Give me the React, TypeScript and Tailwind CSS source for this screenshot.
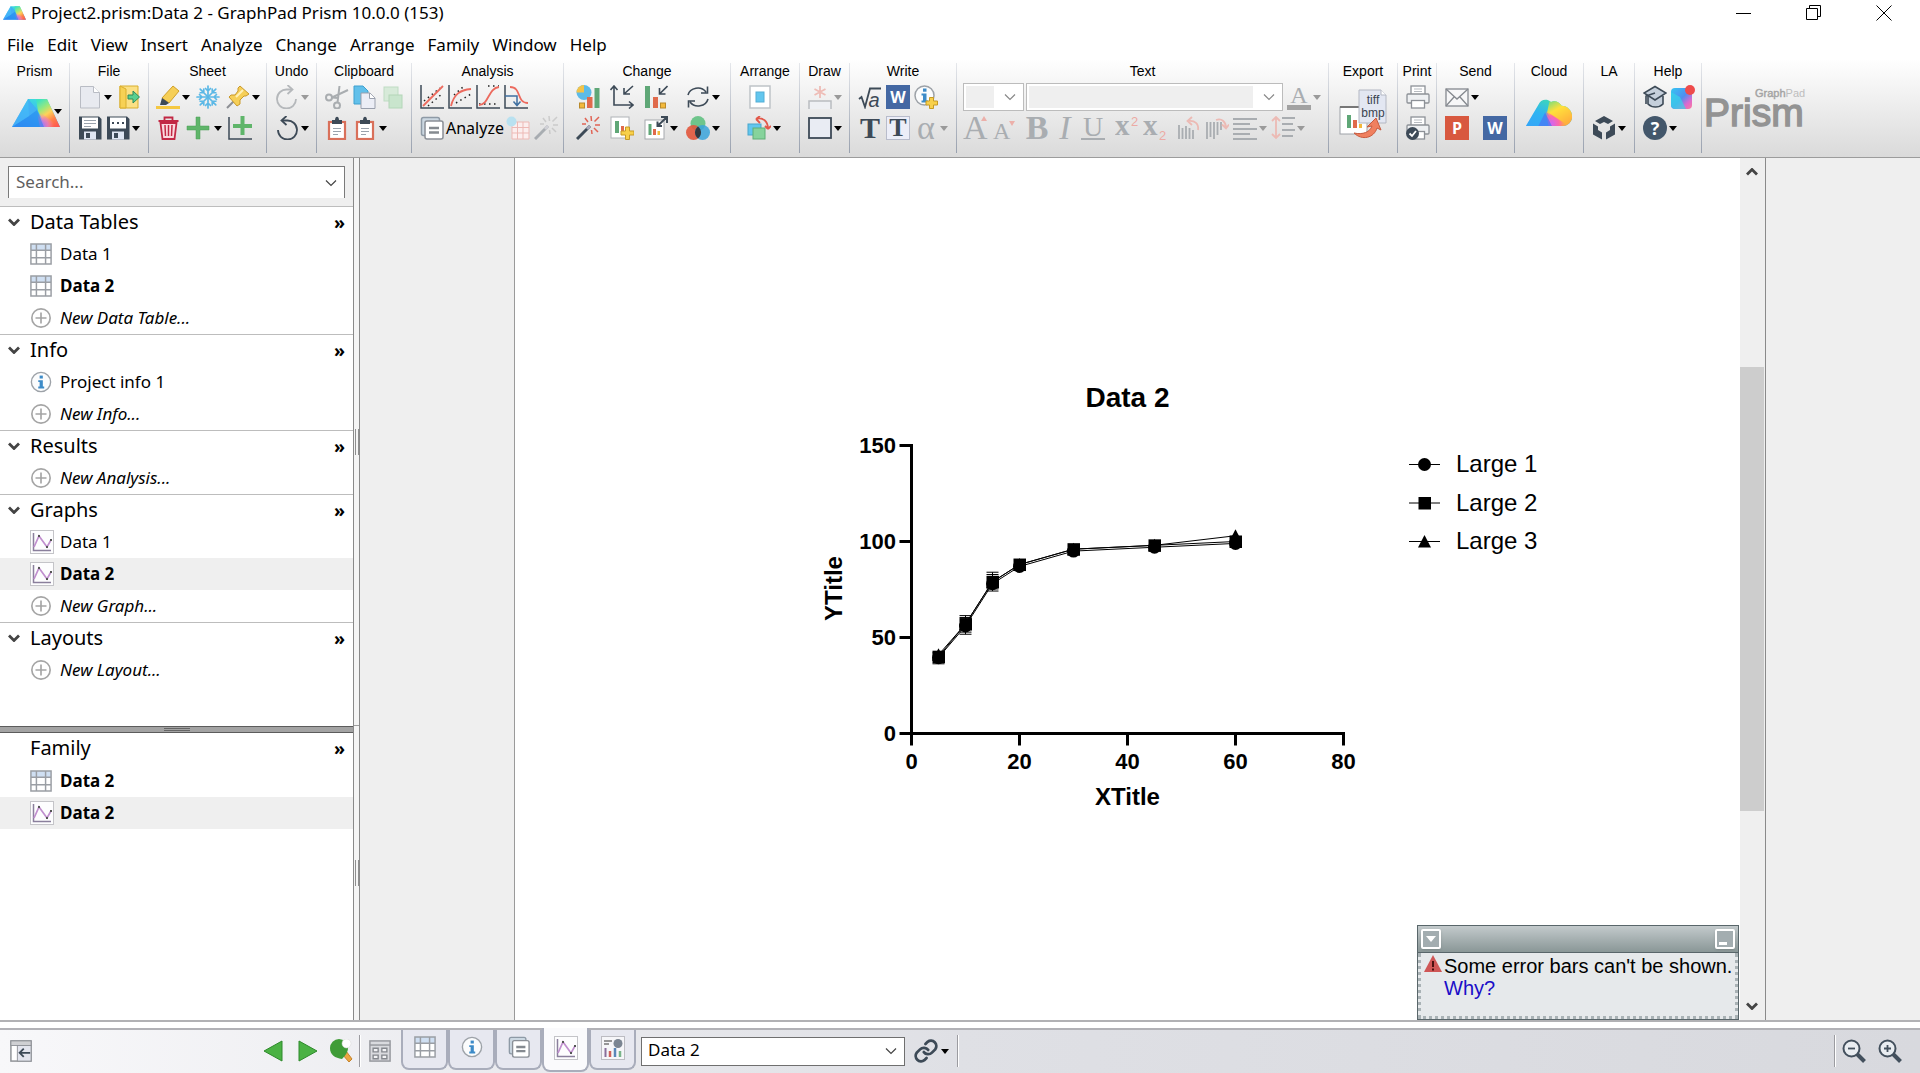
import React from "react";

type Kids = { children?: React.ReactNode };

const INK = "#3d4a57";

function Ico({ children, className = "size-6" }: Kids & { className?: string }) {
  return (
    <svg viewBox="0 0 24 24" className={`${className} shrink-0`} fill="none" aria-hidden="true">
      {children}
    </svg>
  );
}

function Caret({ dim = false }: { dim?: boolean }) {
  return (
    <svg viewBox="0 0 8 5" className="w-2 h-[5px] shrink-0" aria-hidden="true">
      <path d="M0 0H8L4 5Z" fill={dim ? "#9a9a9a" : "#000"} />
    </svg>
  );
}

function Tool({
  label,
  children,
  caret,
  dim,
  gap = "gap-0.5",
}: Kids & { label: string; caret?: boolean; dim?: boolean; gap?: string }) {
  return (
    <button type="button" aria-label={label} title={label} className={`flex items-center ${gap} shrink-0`}>
      {children}
      {caret && <Caret dim={dim} />}
    </button>
  );
}

function Group({ label, width, pad = "px-2", children }: Kids & { label: string; width: string; pad?: string }) {
  return (
    <section aria-label={label} className={`flex shrink-0 ${width}`}>
      <div className="min-w-0 flex-1 flex flex-col pt-0.5">
        <h2 className="h-5 leading-5 text-center text-sm whitespace-nowrap">{label}</h2>
        <div className={`pt-1 flex flex-col gap-[7px] ${pad}`}>{children}</div>
      </div>
      <div className="w-px mt-1 mb-1 bg-linear-to-b from-gray-200 to-gray-400" />
    </section>
  );
}

function Row({ children, className = "gap-1" }: Kids & { className?: string }) {
  return <div className={`flex items-center h-6 ${className}`}>{children}</div>;
}

/* ---------- logos ---------- */

function PrismLogo({ className, id }: { className: string; id: string }) {
  return (
    <svg viewBox="0 0 48 28" className={`${className} shrink-0`} aria-hidden="true">
      <defs>
        <linearGradient id={`${id}a`} x1="0" y1="1" x2="0.6" y2="0">
          <stop offset="0" stopColor="#2f8ff5" />
          <stop offset="0.55" stopColor="#38b6f4" />
          <stop offset="1" stopColor="#3fe0d8" />
        </linearGradient>
        <linearGradient id={`${id}b`} x1="0.2" y1="0" x2="0.8" y2="1">
          <stop offset="0" stopColor="#3fe3c0" />
          <stop offset="0.3" stopColor="#9fe87a" />
          <stop offset="0.5" stopColor="#ffd25a" />
          <stop offset="0.75" stopColor="#ff8148" />
          <stop offset="1" stopColor="#ff5a50" />
        </linearGradient>
        <radialGradient id={`${id}c`} cx="30" cy="26" r="12" gradientUnits="userSpaceOnUse">
          <stop offset="0" stopColor="#a877f0" />
          <stop offset="0.5" stopColor="#e07ad0" stopOpacity="0.8" />
          <stop offset="1" stopColor="#ff8aa0" stopOpacity="0" />
        </radialGradient>
      </defs>
      <path d="M16 0H35L48 28H0Z" fill={`url(#${id}a)`} />
      <path d="M24 0H35L48 28H34L26 12Z" fill={`url(#${id}b)`} />
      <path d="M24 10L48 28H28Z" fill={`url(#${id}c)`} />
      <path d="M16 0L25 11L32 28H0L17 17Z" fill="#2a86f0" opacity="0.6" />
      <path d="M16 0L25 11L17 17L0 28Z" fill="#48b8f8" opacity="0.7" />
    </svg>
  );
}

function CloudLogo() {
  return (
    <svg viewBox="0 0 48 29" className="w-12 h-7 shrink-0" aria-hidden="true">
      <defs>
        <clipPath id="cloud">
          <path d="M0 28L13 6C15 1 21 -1 26 3C30 1 35 3 37 7C43 7 48 12 48 18C48 24 43 28 38 28Z" />
        </clipPath>
        <linearGradient id="cl1" x1="0" y1="1" x2="0.6" y2="0">
          <stop offset="0" stopColor="#36a4f8" />
          <stop offset="0.5" stopColor="#2fb4f2" />
          <stop offset="1" stopColor="#3fdcb0" />
        </linearGradient>
        <linearGradient id="cl2" x1="0" y1="0" x2="0.5" y2="1">
          <stop offset="0" stopColor="#58dc8c" />
          <stop offset="0.45" stopColor="#ffe03c" />
          <stop offset="1" stopColor="#ffb03c" />
        </linearGradient>
        <radialGradient id="cl3" cx="27" cy="25" r="15" gradientUnits="userSpaceOnUse">
          <stop offset="0" stopColor="#d566f0" />
          <stop offset="0.5" stopColor="#ff60b0" stopOpacity="0.9" />
          <stop offset="1" stopColor="#ff8a60" stopOpacity="0" />
        </radialGradient>
      </defs>
      <g clipPath="url(#cloud)">
        <rect width="48" height="29" fill="url(#cl1)" />
        <path d="M25 0H48V29H32L22 14Z" fill="url(#cl2)" />
        <path d="M20 12L46 29H24Z" fill="url(#cl3)" />
        <path d="M13 28L20 14L27 28Z" fill="#4a78f4" opacity="0.75" />
      </g>
    </svg>
  );
}

/* ---------- toolbar icons ---------- */

const PageIco = () => (
  <Ico>
    <path d="M2.500 1.500H15.500L21.500 7.500V23H2.500Z" fill="#e8eaf0" stroke="#b9bcc4" />
    <path d="M15.500 1.500V7.500H21.500" fill="#fff" stroke="#b9bcc4" />
  </Ico>
);
const OpenIco = () => (
  <Ico>
    <path d="M4 1H22V23H4Z" fill="#fbe084" stroke="#d9ae2c" />
    <path d="M4 1L10 4V23H4Z" fill="#f7d154" stroke="#d9ae2c" />
    <path d="M12 10H17V6L23.500 12L17 18V14H12Z" fill="#58cf90" stroke="#2f8a5b" />
  </Ico>
);
const SaveIco = ({ dots = false }) => (
  <Ico>
    <path d="M1 0.500H21L23.500 3V23.500H1Z" fill={INK} />
    <rect x="4" y="1.500" width="16" height="11" fill="#fff" />
    {dots ? (
      <path d="M6 7H8M11 7H13M16 7H18" stroke={INK} strokeWidth="2" />
    ) : (
      <path d="M6 4.500H18M6 7.500H18M6 10.500H13" stroke="#9aa3ad" />
    )}
    <rect x="6" y="15.500" width="12" height="8" fill="#dfe6f2" />
    <rect x="8" y="17" width="4" height="5" fill={INK} />
  </Ico>
);
const HighlightIco = () => (
  <Ico>
    <rect x="0" y="21" width="24" height="3" fill="#f5c842" />
    <path d="M6 13L17 1L23 6L13 18Z" fill="#f6cf57" stroke="#d0a02a" />
    <path d="M6 13L13 18L10 20H4Z" fill={INK} />
  </Ico>
);
const SnowIco = () => (
  <Ico>
    <g stroke="#5bb8e6" strokeWidth="1.700" strokeLinecap="round">
      {[0, 45, 90, 135, 180, 225, 270, 315].map((a) => (
        <path key={a} transform={`rotate(${a} 12 12)`} d="M12 12V1M12 6L9.500 3.500M12 6L14.500 3.500" />
      ))}
    </g>
  </Ico>
);
const PinIco = () => (
  <Ico>
    <path d="M1 23L9 15" stroke="#8c8f94" strokeWidth="2" />
    <path d="M14 1L23 9L20 11L18 11L14 15L14 19L11 21L3 12L5 10H9L12 6V3Z" fill="#f6cf57" stroke="#c9992b" />
    <path d="M10 12L17 5" stroke="#fff0b8" strokeWidth="2" />
  </Ico>
);
const TrashIco = () => (
  <Ico>
    <path d="M4.500 7H20.500L18.500 23H6.500Z" fill="#fbd9de" stroke="#c22844" strokeWidth="1.800" />
    <path d="M2.500 5H22.500M8.500 5V1.500H16.500V5" stroke="#c22844" strokeWidth="1.800" />
    <path d="M9 9L9.500 20M12.500 9V20M16 9L15.500 20" stroke="#c22844" strokeWidth="1.500" />
  </Ico>
);
const PlusIco = () => (
  <Ico>
    <path d="M10 1H14V10H23V14H14V23H10V14H1V10H10Z" fill="#5fb56a" stroke="#4a9c57" strokeWidth="0.500" />
  </Ico>
);
const AxesPlusIco = () => (
  <Ico>
    <path d="M1 1V23H24" stroke={INK} strokeWidth="1.500" />
    <path d="M12.500 0H16.500V8H24V12H16.500V19H12.500V12H5V8H12.500Z" fill="#5fb56a" />
  </Ico>
);
const RedoIco = ({ flip = false, color = "#b5b8bb" }) => (
  <Ico>
    <g transform={flip ? "matrix(-1 0 0 1 24 0)" : undefined} stroke={color} strokeWidth="1.800">
      <path d="M21 14A9.500 9.500 0 1 1 12 4.500H17" />
      <path d="M12.500 0L17.500 4.500L12.500 9" />
    </g>
  </Ico>
);
const CutIco = () => (
  <Ico>
    <g stroke="#a9adb0" strokeWidth="2">
      <circle cx="4" cy="12.500" r="3" />
      <circle cx="12" cy="20.500" r="3" />
      <path d="M7 12.500L23 5M12.500 17.500L14.500 1M7 12.500L13 13" />
    </g>
  </Ico>
);
const CopyIco = () => (
  <Ico>
    <path d="M1 1H10L15 6V19H1Z" fill="#62c0ea" stroke="#3ea0cf" />
    <path d="M8 8H17L22 13V23.500H8Z" fill="#eceef6" stroke="#9aa0ad" />
    <path d="M16.500 8V13.500H22" stroke="#9aa0ad" fill="#fff" />
  </Ico>
);
const DupIco = () => (
  <Ico>
    <rect x="3" y="2" width="14" height="14" fill="#d7ead9" stroke="#bfdcc3" />
    <rect x="8" y="10" width="13" height="13" fill="#c9e5cd" stroke="#b3d6b8" />
  </Ico>
);
const PasteIco = () => (
  <Ico>
    <rect x="4" y="6" width="16" height="17" fill="#fff" stroke="#d9705a" strokeWidth="2.200" />
    <path d="M7 8V4H10C10 -0.500 14 -0.500 14 4H17V8Z" fill={INK} />
    <path d="M8 12.500H16M8 15.500H16M8 18.500H13" stroke="#9aa3ad" />
  </Ico>
);
const CurveIco = ({ d, dots, extra }: { d: string; dots?: string; extra?: string }) => (
  <Ico>
    <path d="M1 0V23H24" stroke={INK} strokeWidth="1.500" />
    {dots && <path d={dots} stroke="#222" strokeWidth="1.500" strokeDasharray="1.500 3.500" />}
    <path d={d} stroke="#ec6a5e" strokeWidth="1.800" />
    {extra && <path d={extra} stroke="#3f6fa0" strokeWidth="1.500" />}
  </Ico>
);
const SheetsIco = ({ className = "size-6" }: { className?: string }) => (
  <Ico className={className}>
    <rect x="1.500" y="1.500" width="18" height="18" rx="2" fill="#ccd8e2" stroke="#8e9aa6" strokeWidth="1.500" />
    <rect x="5" y="5" width="18" height="18" rx="2" fill="#fff" stroke="#8a8f96" strokeWidth="1.500" />
    <path d="M9 12H19M9 16.500H19" stroke="#858a90" strokeWidth="2.500" />
  </Ico>
);
const SnowTableIco = () => (
  <Ico>
    <path d="M6 6H23V23H6ZM11.500 6V23M17 6V23M6 11.500H23M6 17H23" fill="#fbeeee" stroke="#edb9b5" />
    <circle cx="5.500" cy="5.500" r="5" fill="#b9e1f0" />
  </Ico>
);
const WandIco = ({ dim = false }) => (
  <Ico>
    <g opacity={dim ? 0.35 : 1}>
      <path d="M1 23L14 10" stroke={INK} strokeWidth="3" />
      <path d="M11 13L14 10" stroke="#aab" strokeWidth="3" />
      <path
        d="M15 0L15.500 5M9 2L12 6M23 1L18.500 5.500M24 9H19M22 16L18 12M6 8H10M16 18L15.500 14"
        stroke={dim ? "#999" : "#e06455"}
        strokeWidth="1.500"
      />
    </g>
  </Ico>
);
const PieBarsIco = () => (
  <Ico>
    <circle cx="8" cy="7.500" r="7.500" fill="#5cbbe8" />
    <path d="M8 7.500V0A7.500 7.500 0 0 0 0.500 7.500Z" fill="#f3c349" />
    <rect x="18.500" y="3" width="5" height="20" fill="#5fa777" />
    <rect x="11" y="12" width="5.500" height="11" fill="#e06a4c" />
    <rect x="3.500" y="18" width="5" height="5" fill="#f3b93c" stroke="#b98a2a" />
  </Ico>
);
const AxesIco = () => (
  <Ico>
    <g stroke={INK} strokeWidth="1.600">
      <path d="M4 1V20H23M0.500 5L4 1L7.500 5M19 16.500L23 20L19 23.500" />
      <path d="M23 1L14 9M14 3V9H20" />
    </g>
  </Ico>
);
const BarsInIco = () => (
  <Ico>
    <rect x="1" y="1" width="5" height="22" fill="#5fa777" />
    <rect x="9" y="12" width="5" height="11" fill="#e06a4c" />
    <rect x="16.500" y="18" width="5" height="5" fill="#f3b93c" stroke="#b98a2a" />
    <path d="M23.500 1L15.500 9M15.500 3V9H21.500" stroke={INK} strokeWidth="1.600" />
  </Ico>
);
const CycleIco = () => (
  <Ico>
    <g stroke={INK} strokeWidth="1.600">
      <path d="M2 10A10 9 0 0 1 20 7M21.500 1.500V8H15M22 14A10 9 0 0 1 4 17M2.500 22.500V16H9" />
    </g>
  </Ico>
);
const GraphPlusIco = () => (
  <Ico>
    <rect x="1" y="1" width="18" height="21" fill="#fff" stroke="#b0b3b8" />
    <rect x="5" y="5" width="4" height="12" fill="#5fa777" />
    <rect x="11" y="10" width="3" height="7" fill="#e06a4c" />
    <path d="M15.500 11H19.500V15H24V19H19.500V23.500H15.500V19H11V15H15.500Z" fill="#f8d04a" stroke="#c79a25" />
  </Ico>
);
const GraphOutIco = () => (
  <Ico>
    <rect x="1" y="4" width="19" height="19" fill="#fff" stroke="#a6a9ae" />
    <rect x="4.500" y="8" width="3" height="11" fill="#5fa777" />
    <rect x="9" y="13" width="3" height="6" fill="#e06a4c" />
    <rect x="13.500" y="15" width="2.500" height="4" fill="#f3b93c" />
    <path d="M13.500 10L23 1M17 1H23V7M13.500 5.500V10H18" stroke={INK} strokeWidth="2" />
  </Ico>
);
const VennIco = () => (
  <Ico>
    <circle cx="12" cy="7.500" r="7.500" fill="#6fc58c" />
    <circle cx="7.500" cy="16.500" r="7.500" fill="#e2563c" opacity="0.9" />
    <circle cx="16.500" cy="16.500" r="7.500" fill="#3aa3da" opacity="0.85" />
    <path d="M12 10.500A7.500 7.500 0 0 1 12 22.500A7.500 7.500 0 0 1 12 10.500Z" fill="#33383f" />
  </Ico>
);
const FrameIco = () => (
  <Ico>
    <rect x="3" y="1" width="20" height="22" fill="#fff" stroke="#bfc3c8" strokeWidth="1.500" />
    <rect x="9" y="7" width="8" height="10" fill="#62c6ee" stroke="#53aed6" />
  </Ico>
);
const RotateIco = () => (
  <Ico>
    <rect x="1" y="8" width="13" height="11" fill="#62c6ee" stroke="#4aa6cc" />
    <rect x="6" y="12" width="12" height="11" fill="#86d39c" stroke="#5fae77" />
    <path d="M9 3C16 1 21 5 21 13M9 3L13 0M9 3L13 7M21 13L18 10M21 13L24 10" stroke="#e2584a" strokeWidth="1.800" />
  </Ico>
);
const StarBracketIco = () => (
  <Ico>
    <path d="M12 1V13M6.500 4L17.500 10M17.500 4L6.500 10" stroke="#eebcb6" strokeWidth="1.800" />
    <path d="M1 24V16H23V24" stroke="#b9bcc0" strokeWidth="1.500" fill="#eef0f4" />
  </Ico>
);
const RectIco = () => (
  <Ico>
    <rect x="1" y="2" width="22" height="20" fill="#e9ecf3" stroke={INK} strokeWidth="1.800" />
  </Ico>
);
const LetterTile = ({ ch, color }: { ch: string; color: string }) => (
  <Ico>
    <rect width="24" height="24" fill={color} />
    <text x="12" y="18" fill="#fff" fontSize="16" fontWeight="700" textAnchor="middle" fontFamily="Open Sans, sans-serif">
      {ch}
    </text>
  </Ico>
);
const InfoIco = ({ className = "size-6", plus = false }) => (
  <Ico className={className}>
    <circle cx={plus ? 10.5 : 12} cy={plus ? 10.5 : 12} r={plus ? 9.5 : 10.5} fill="#fbfcfd" stroke="#9da2a8" strokeWidth="1.500" />
    <g transform={plus ? "translate(-1.500 -1.500)" : undefined} fill="#3d8bc8">
      <rect x="10.500" y="5" width="3.500" height="3.200" />
      <path d="M9 10H14V17H15.500V19H9V17H10.500V12H9Z" />
    </g>
    {plus && <path d="M15.500 12.500H19.500V16H23.500V20H19.500V23.500H15.500V20H12V16H15.500Z" fill="#f8d04a" stroke="#c79a25" />}
  </Ico>
);
const ScriptIco = ({ y }: { y: number }) => (
  <Ico>
    <text x="0" y="19" fill="#a9adb1" fontSize="29" fontWeight="700" fontFamily="Liberation Serif, serif">
      x
    </text>
    <text x="16" y={y} fill="#ecaaa4" fontSize="13" fontFamily="Liberation Sans, sans-serif">
      2
    </text>
  </Ico>
);
const TextRotIco = ({ flip = false }) => (
  <Ico>
    <path d={flip ? "M2 6V23M5.500 6V21M9 6V23M12.500 6V19M16 6V14" : "M2 9V23M5.500 12V23M9 10V23M12.500 12V23M16 14V23"} stroke="#a9adb1" strokeWidth="1.800" />
    <path
      d={flip ? "M11 4C17 2 21 6 21 12M17 8.500L21 12.500L24 8.500" : "M21 14C22 8 18 4 11 5M15 1L10.500 5L15 9"}
      stroke="#ecbab4"
      strokeWidth="1.800"
    />
  </Ico>
);
const AlignIco = () => (
  <Ico>
    <path d="M0 3H24M0 8H17M0 13H24M0 18H17M0 23H24" stroke="#a9adb1" strokeWidth="1.800" />
  </Ico>
);
const SpacingIco = () => (
  <Ico>
    <path d="M5 1V22M1 5L5 1L9 5M1 18L5 22L9 18" stroke="#ecbab4" strokeWidth="1.800" />
    <path d="M11 2H24M11 8H22M11 14H24M11 20H22" stroke="#a9adb1" strokeWidth="1.800" />
  </Ico>
);
const PrinterIco = ({ check = false }) => (
  <Ico>
    <rect x="5" y="1" width="14" height="10" fill="#fff" stroke="#8d9197" strokeWidth="1.300" />
    <rect x="1" y="9" width="22" height="9" rx="1" fill="#eef0f2" stroke="#8d9197" strokeWidth="1.300" />
    <rect x="5.500" y="15.500" width="13" height="7.500" fill="#fff" stroke="#8d9197" strokeWidth="1.300" />
    <path d="M8 4H16M8 6.500H16" stroke="#b7bbc0" />
    {check && (
      <>
        <circle cx="6.500" cy="17.500" r="6.500" fill={INK} />
        <path d="M3.500 17.500L6 20L10 15" stroke="#fff" strokeWidth="1.800" />
      </>
    )}
  </Ico>
);
const MailIco = () => (
  <Ico>
    <rect x="1" y="4" width="22" height="17" fill="#f7f7f8" stroke="#85898f" strokeWidth="1.300" />
    <path d="M1 4L12 14L23 4M1 21L9 12M23 21L15 12" stroke="#85898f" strokeWidth="1.300" />
  </Ico>
);
const CubeIco = () => (
  <Ico>
    <path d="M12 0L21 5L16 8L12 6L8 8L3 5Z" fill={INK} />
    <path d="M1 7.500L6 10.500V14L10 16.500V23.500L1 18.500Z" fill={INK} />
    <path d="M23 7.500L18 10.500V14L14 16.500V23.500L23 18.500Z" fill={INK} />
  </Ico>
);
const CapIco = () => (
  <Ico>
    <path d="M5 11V19C9 23 16 23 20 19V11" fill="#c5cfdb" stroke={INK} strokeWidth="1.600" />
    <path d="M12 1.500L23 8L12 15L1 8Z" fill="#c5cfdb" stroke={INK} strokeWidth="1.600" />
    <path d="M12 8L3 11V19" stroke={INK} strokeWidth="1.600" />
  </Ico>
);
const NewsIco = () => (
  <Ico>
    <defs>
      <linearGradient id="nw" x1="0" y1="0" x2="1" y2="1">
        <stop offset="0" stopColor="#34c7f2" />
        <stop offset="0.5" stopColor="#4f8ef0" />
        <stop offset="0.75" stopColor="#d96ad0" />
        <stop offset="1" stopColor="#ff7a9a" />
      </linearGradient>
    </defs>
    <rect x="0" y="3" width="21" height="21" rx="4" fill="url(#nw)" />
    <path d="M0 7V20C0 22 2 24 4 24H15L9 12Z" fill="#36d6e8" opacity="0.7" />
    <circle cx="19" cy="5" r="5" fill="#ee4b4b" />
  </Ico>
);
const HelpIco = () => (
  <Ico>
    <circle cx="12" cy="12" r="12" fill="#43576b" />
    <text x="12" y="18.500" fill="#fff" fontSize="18" fontWeight="700" textAnchor="middle" fontFamily="Open Sans, sans-serif">
      ?
    </text>
  </Ico>
);
const ExportIco = () => (
  <svg viewBox="0 0 48 50" className="w-12 h-[50px]" fill="none" aria-hidden="true">
    <rect x="1" y="18" width="27" height="27" fill="#fff" stroke="#9ea2a8" />
    <path d="M1 18H28" stroke="#777" strokeWidth="2" />
    <rect x="8" y="26" width="4" height="13" fill="#5fa777" />
    <rect x="14" y="31" width="4" height="8" fill="#e06a4c" />
    <rect x="20" y="35" width="3" height="4" fill="#f3b93c" />
    <path d="M20 1H42L47 6V34H20Z" fill="#e3e7f2" stroke="#b3b7c2" />
    <path d="M42 1V6H47" fill="#fff" stroke="#b3b7c2" />
    <g fill="#3a4450" fontSize="12" textAnchor="middle" fontFamily="Liberation Sans, sans-serif">
      <text x="34" y="15">tiff</text>
      <text x="34" y="28">bmp</text>
    </g>
    <path d="M15 44C24 46 31 43 33 37L28 38L37 29L42 41L38 39C35 49 23 52 15 44Z" fill="#f0805f" stroke="#c85a3e" />
  </svg>
);

/* ---------- navigator icons ---------- */

const TableIco = () => (
  <Ico className="size-[22px]">
    <rect x="1" y="1" width="22" height="22" fill="#fff" />
    <rect x="1" y="1" width="22" height="7" fill="#cfdff2" />
    <path d="M1 1H23V23H1ZM7 1V23M17 1V23M1 8H23M1 16H23" stroke="#9a9ea4" strokeWidth="1.600" />
  </Ico>
);
const GraphIco = () => (
  <Ico className="size-6">
    <rect x="0.500" y="0.500" width="23" height="23" fill="#fdfdfe" stroke="#c4c4c8" />
    <path d="M3.500 3V20.500H21" stroke="#8a7f9c" strokeWidth="1.500" />
    <path d="M4 17L9 6L17 17L21 10" stroke="#c08fce" strokeWidth="1.700" />
    <path d="M8 6H10M16 17H18M20 10H22" stroke="#555" strokeWidth="2" />
  </Ico>
);
const AddIco = () => (
  <Ico className="size-[22px]">
    <circle cx="12" cy="12" r="10" stroke="#a5a5a5" strokeWidth="1.800" />
    <path d="M12 6V18M6 12H18" stroke="#a5a5a5" strokeWidth="1.800" />
  </Ico>
);
const Chevron = ({ className, color = "#444", w = 1 }: { className: string; color?: string; w?: number }) => (
  <svg viewBox="0 0 12 8" className={`${className} shrink-0`} fill="none" aria-hidden="true">
    <path d="M1 1.500L6 6.500L11 1.500" stroke={color} strokeWidth={w} />
  </svg>
);

type Item = { kind: "table" | "graph" | "info" | "new"; text: string; bold?: boolean; on?: boolean };

function NavItem({ kind, text, bold, on }: Item) {
  return (
    <li>
      <button
        type="button"
        className={`w-full h-8 pl-[30px] flex items-center text-[17px] ${on ? "bg-[#efefef]" : ""} ${bold ? "font-bold" : ""} ${
          kind === "new" ? "italic" : ""
        }`}
      >
        <span className="w-[30px] flex">
          {kind === "table" && <TableIco />}
          {kind === "graph" && <GraphIco />}
          {kind === "info" && <InfoIco className="size-[22px]" />}
          {kind === "new" && <AddIco />}
        </span>
        {text}
      </button>
    </li>
  );
}

function NavSection({ title, items, open = true }: { title: string; items: Item[]; open?: boolean }) {
  return (
    <section className={open ? "border-t border-[#bdbdbd]" : ""}>
      <header className={`flex items-center pl-2 pr-2 pb-0.5 ${open ? "h-[31px]" : "h-8"}`}>
        <span className="w-[22px] flex">{open && <Chevron className="w-3 h-2" w={2.8} />}</span>
        <h3 className="flex-1 text-xl leading-6">{title}</h3>
        <button type="button" aria-label={`More ${title}`} className="text-lg leading-6 font-bold">
          »
        </button>
      </header>
      <ul>
        {items.map((it, i) => (
          <NavItem key={i} {...it} />
        ))}
      </ul>
    </section>
  );
}

const sections: { title: string; items: Item[] }[] = [
  {
    title: "Data Tables",
    items: [
      { kind: "table", text: "Data 1" },
      { kind: "table", text: "Data 2", bold: true },
      { kind: "new", text: "New Data Table..." },
    ],
  },
  {
    title: "Info",
    items: [
      { kind: "info", text: "Project info 1" },
      { kind: "new", text: "New Info..." },
    ],
  },
  { title: "Results", items: [{ kind: "new", text: "New Analysis..." }] },
  {
    title: "Graphs",
    items: [
      { kind: "graph", text: "Data 1" },
      { kind: "graph", text: "Data 2", bold: true, on: true },
      { kind: "new", text: "New Graph..." },
    ],
  },
  { title: "Layouts", items: [{ kind: "new", text: "New Layout..." }] },
];

/* ---------- chart ---------- */

const X0 = 204.5;
const Y0 = 374.5;
const px = (v: number) => X0 + v * 5.4;
const py = (v: number) => Y0 - v * 1.92;

const xs = [5, 10, 15, 20, 30, 45, 60];
const large1 = [39.5, 56, 78, 87, 95, 97, 99];
const large2 = [40, 57, 79, 88, 96, 98, 100];
const large3 = [41, 57, 79, 88, 96, 98, 103];
const bars: [number, number, number][] = [
  [5, 36.3, 42],
  [10, 51.7, 61.4],
  [10, 52.8, 60.4],
  [15, 74.2, 84],
  [15, 75.3, 82.8],
];

const line = (ys: number[]) => ys.map((y, i) => `${px(xs[i])},${py(y)}`).join(" ");

const Dot = ({ x, y }: { x: number; y: number }) => <circle cx={x} cy={y} r="6.500" />;
const Sq = ({ x, y }: { x: number; y: number }) => <rect x={x - 6} y={y - 6} width="12.500" height="12.500" />;
const Tri = ({ x, y }: { x: number; y: number }) => <path d={`M${x} ${y - 6.5}L${x + 6.5} ${y + 6}H${x - 6.5}Z`} />;

function Chart() {
  return (
    <svg
      viewBox="0 0 841 460"
      className="w-[841px] h-[460px] shrink-0"
      role="img"
      aria-label="Data 2 graph"
      fontFamily="Liberation Sans, Arial, sans-serif"
    >
      <text x="420.500" y="48" textAnchor="middle" fontSize="28" fontWeight="700">
        Data 2
      </text>
      <g stroke="#000" strokeWidth="3" fill="none">
        <path d={`M${X0} ${py(150) - 1.5}V${Y0}H${px(80) + 1.5}`} />
        {[0, 50, 100, 150].map((v) => (
          <path key={v} d={`M${X0} ${py(v)}H${X0 - 12}`} />
        ))}
        {[0, 20, 40, 60, 80].map((v) => (
          <path key={v} d={`M${px(v)} ${Y0}V${Y0 + 12}`} />
        ))}
      </g>
      <g fontSize="22" fontWeight="700">
        {[0, 50, 100, 150].map((v) => (
          <text key={v} x="189" y={py(v) + 7.5} textAnchor="end">
            {v}
          </text>
        ))}
        {[0, 20, 40, 60, 80].map((v) => (
          <text key={v} x={px(v)} y="410" textAnchor="middle">
            {v}
          </text>
        ))}
      </g>
      <g fontSize="24" fontWeight="700" textAnchor="middle">
        <text x="420.500" y="446">
          XTitle
        </text>
        <text transform="translate(135 229.500) rotate(-90)">YTitle</text>
      </g>
      <g stroke="#000" fill="none">
        {[large1, large2, large3].map((s, i) => (
          <polyline key={i} points={line(s)} />
        ))}
        {bars.map(([x, lo, hi], i) => (
          <path key={i} d={`M${px(x) - 6} ${py(lo)}H${px(x) + 6}M${px(x)} ${py(lo)}V${py(hi)}M${px(x) - 6} ${py(hi)}H${px(x) + 6}`} />
        ))}
      </g>
      {xs.map((x, i) => (
        <g key={x}>
          <Dot x={px(x)} y={py(large1[i])} />
          <Sq x={px(x)} y={py(large2[i])} />
          <Tri x={px(x)} y={py(large3[i])} />
        </g>
      ))}
      <g fontSize="24">
        {["Large 1", "Large 2", "Large 3"].map((t, i) => (
          <g key={t}>
            <path d={`M702 ${105.5 + i * 38.5}H733`} stroke="#000" />
            {i === 0 && <Dot x={717.5} y={105.5} />}
            {i === 1 && <Sq x={717.5} y={144} />}
            {i === 2 && <Tri x={717.5} y={182.5} />}
            <text x="749" y={113 + i * 38.5}>
              {t}
            </text>
          </g>
        ))}
      </g>
    </svg>
  );
}

function Warning() {
  return (
    <aside className="absolute right-px bottom-0 w-[322px] h-[95px] border border-[#59666a] bg-[#e6e9eb] flex flex-col">
      <header className="h-[27px] shrink-0 px-[3px] flex items-center justify-between border-b border-[#59666a] bg-linear-to-b from-[#c3cacc] to-[#8a9797]">
        <button type="button" aria-label="Menu" className="size-5 border-2 border-white rounded-xs bg-[#a3adb0] shadow flex items-center justify-center">
          <svg viewBox="0 0 10 6" className="w-2.5 h-1.5" aria-hidden="true">
            <path d="M0 0H10L5 6Z" fill="#fff" />
          </svg>
        </button>
        <button type="button" aria-label="Minimize panel" className="size-5 border-2 border-white rounded-xs bg-[#a3adb0] shadow flex items-end p-0.5">
          <span className="w-2 h-[3px] bg-white" />
        </button>
      </header>
      <div className="flex-1 border-3 border-t-0 border-dotted border-[#a9b2b5] pl-[3px] pt-0.5 flex items-start">
        <svg viewBox="0 0 18 18" className="w-[18px] h-[18px] mr-0.5 shrink-0" aria-hidden="true">
          <path d="M9 0L18 17H0Z" fill="#cf5656" />
          <path d="M9 6V12M9 13.500V15.500" stroke="#4a1010" strokeWidth="2" />
        </svg>
        <p className="text-xl leading-[22px] whitespace-nowrap">
          Some error bars can't be shown.
          <br />
          <a href="#why" className="text-[#1a0dc8]">
            Why?
          </a>
        </p>
      </div>
    </aside>
  );
}

function Grip() {
  return <span className="w-1 h-[26px] border-x border-[#8f8f8f]" />;
}

function BottomTab({ label, on, children }: Kids & { label: string; on?: boolean }) {
  return (
    <button
      type="button"
      aria-label={label}
      className={`w-[47px] flex justify-center rounded-b-lg border-2 border-t-0 border-[#a9adbb] ${
        on ? "h-[44px] -mt-0.5 pt-2 bg-[#fafafc]" : "h-10 pt-1.5 bg-[#e7e8f0]"
      }`}
    >
      {children}
    </button>
  );
}

const Divider = () => <span className="w-0.5 h-8 border-l border-[#9b9ba0] bg-white" />;

export default function App() {
  return (
    <div className="h-screen min-h-[1000px] flex flex-col overflow-hidden bg-white text-black font-['Liberation_Sans',Arial,sans-serif] text-sm">
      <header className="h-7 shrink-0 flex items-center pl-[3px] pb-0.5 font-['Noto_Sans',sans-serif]">
        <PrismLogo id="t" className="w-[23px] h-3.5" />
        <h1 className="flex-1 pl-[5px] text-[17px]">Project2.prism:Data 2 - GraphPad Prism 10.0.0 (153)</h1>
        <div className="flex items-center gap-[54px] pr-7">
          <button type="button" aria-label="Minimize">
            <svg viewBox="0 0 16 16" className="size-4" fill="none" stroke="#000">
              <path d="M0 8.500H15" />
            </svg>
          </button>
          <button type="button" aria-label="Restore">
            <svg viewBox="0 0 16 16" className="size-4" fill="none" stroke="#000">
              <path d="M0.500 3.500H11.500V14.500H0.500ZM3.500 3.500V0.500H14.500V11.500H11.500" />
            </svg>
          </button>
          <button type="button" aria-label="Close">
            <svg viewBox="0 0 16 16" className="size-4" fill="none" stroke="#000">
              <path d="M0.500 0.500L15.500 15.500M15.500 0.500L0.500 15.500" />
            </svg>
          </button>
        </div>
      </header>

      <nav className="h-[31px] shrink-0 flex items-center gap-[13px] pl-[7px] pt-1 text-[17px] font-['Noto_Sans',sans-serif]">
        {["File", "Edit", "View", "Insert", "Analyze", "Change", "Arrange", "Family", "Window", "Help"].map((m) => (
          <button key={m} type="button">
            {m}
          </button>
        ))}
      </nav>

      <div className="h-[99px] shrink-0 flex border-b border-[#9c9c9c] bg-linear-to-b from-white to-[#dadada]">
        <Group label="Prism" width="w-[70px]">
          <div className="pl-1 pt-3.5">
            <Tool label="Prism menu" gap="gap-0">
              <PrismLogo id="p" className="w-12 h-7" />
              <span className="-ml-1.5 -mt-1 flex">
                <Caret />
              </span>
            </Tool>
          </div>
        </Group>

        <Group label="File" width="w-[79px]">
          <Row>
            <Tool label="New" caret>
              <PageIco />
            </Tool>
            <Tool label="Open">
              <OpenIco />
            </Tool>
          </Row>
          <Row>
            <Tool label="Save">
              <SaveIco />
            </Tool>
            <Tool label="Save as" caret>
              <SaveIco dots />
            </Tool>
          </Row>
        </Group>

        <Group label="Sheet" width="w-[118px]" pad="px-[7px]">
          <Row className="gap-1.5">
            <Tool label="Highlight" caret>
              <HighlightIco />
            </Tool>
            <Tool label="Freeze">
              <SnowIco />
            </Tool>
            <Tool label="Pin" caret>
              <PinIco />
            </Tool>
          </Row>
          <Row className="gap-1.5">
            <Tool label="Delete">
              <TrashIco />
            </Tool>
            <Tool label="New sheet" caret gap="gap-1">
              <PlusIco />
            </Tool>
            <Tool label="New graph of data">
              <AxesPlusIco />
            </Tool>
          </Row>
        </Group>

        <Group label="Undo" width="w-[50px]">
          <Row>
            <Tool label="Redo" caret dim>
              <RedoIco />
            </Tool>
          </Row>
          <Row>
            <Tool label="Undo" caret>
              <RedoIco flip color={INK} />
            </Tool>
          </Row>
        </Group>

        <Group label="Clipboard" width="w-[95px]">
          <Row>
            <Tool label="Cut">
              <CutIco />
            </Tool>
            <Tool label="Copy">
              <CopyIco />
            </Tool>
            <Tool label="Duplicate">
              <DupIco />
            </Tool>
          </Row>
          <Row>
            <Tool label="Paste">
              <PasteIco />
            </Tool>
            <Tool label="Paste special" caret>
              <PasteIco />
            </Tool>
          </Row>
        </Group>

        <Group label="Analysis" width="w-[152px]">
          <Row>
            <Tool label="Linear regression">
              <CurveIco d="M3 21L23 1" dots="M4 16L20 3M8 21L23 8" />
            </Tool>
            <Tool label="Nonlinear regression">
              <CurveIco d="M3 21C6 9 12 5 23 4" dots="M6 10L15 2M8 18L23 9" />
            </Tool>
            <Tool label="Dose response">
              <CurveIco d="M3 20C13 20 12 3 23 2" dots="M3 19H20M12 1H23" />
            </Tool>
            <Tool label="Interpolate">
              <CurveIco d="M6 2C18 2 12 18 24 18" extra="M1 11H13V20M9.500 16.500L13 20.500L16.500 16.500" />
            </Tool>
          </Row>
          <Row>
            <button type="button" className="flex items-center gap-0.5">
              <SheetsIco />
              <span className="w-[56px] text-base leading-6 font-['Noto_Sans',sans-serif]">Analyze</span>
            </button>
            <Tool label="Freeze results">
              <SnowTableIco />
            </Tool>
            <Tool label="Analysis wizard">
              <WandIco dim />
            </Tool>
          </Row>
        </Group>

        <Group label="Change" width="w-[167px]" pad="px-3">
          <div className="h-6 grid grid-cols-[34px_34px_42px_auto] items-center">
            <Tool label="Graph type">
              <PieBarsIco />
            </Tool>
            <Tool label="Format axes">
              <AxesIco />
            </Tool>
            <Tool label="Format graph">
              <BarsInIco />
            </Tool>
            <Tool label="Reverse" caret>
              <CycleIco />
            </Tool>
          </div>
          <div className="h-6 grid grid-cols-[34px_34px_42px_auto] items-center">
            <Tool label="Magic">
              <WandIco />
            </Tool>
            <Tool label="Add data set">
              <GraphPlusIco />
            </Tool>
            <Tool label="Resize graph" caret>
              <GraphOutIco />
            </Tool>
            <Tool label="Colors" caret>
              <VennIco />
            </Tool>
          </div>
        </Group>

        <Group label="Arrange" width="w-[69px]" pad="px-4">
          <Row>
            <Tool label="Center on page">
              <FrameIco />
            </Tool>
          </Row>
          <Row>
            <Tool label="Rotate" caret>
              <RotateIco />
            </Tool>
          </Row>
        </Group>

        <Group label="Draw" width="w-[50px]">
          <Row>
            <Tool label="Significance" caret dim>
              <StarBracketIco />
            </Tool>
          </Row>
          <Row>
            <Tool label="Shape" caret>
              <RectIco />
            </Tool>
          </Row>
        </Group>

        <Group label="Write" width="w-[107px]">
          <Row>
            <Tool label="Equation">
              <Ico>
                <path d="M1 14L3.500 12L7 22L12 3.500H23" stroke={INK} strokeWidth="1.800" />
                <text x="16" y="22" fontSize="20" fill={INK} textAnchor="middle" fontFamily="Liberation Sans, sans-serif" fontStyle="italic">
                  a
                </text>
              </Ico>
            </Tool>
            <Tool label="Word object">
              <LetterTile ch="W" color="#4468a3" />
            </Tool>
            <Tool label="Info note">
              <InfoIco plus />
            </Tool>
          </Row>
          <Row className="gap-1 font-['Liberation_Serif',serif] text-[#3d4a57]">
            <Tool label="Text">
              <span className="w-6 text-center text-3xl leading-6 font-bold">T</span>
            </Tool>
            <Tool label="Text box">
              <span className="size-6 border border-[#b8bccb] bg-[#eceef8] text-center text-[26px] leading-[22px] font-bold">T</span>
            </Tool>
            <Tool label="Greek letters" caret dim>
              <span className="w-6 text-center text-[34px] leading-6 text-[#a9adb1]">α</span>
            </Tool>
          </Row>
        </Group>

        <Group label="Text" width="w-[372px]" pad="px-1.5">
          <Row className="gap-0.5">
            <div className="relative w-[61px] h-7 shrink-0 flex items-center bg-white border border-[#bcbcbc] p-0.5 pr-[7px] gap-2.5">
              <span className="flex-1 h-full bg-[#efefef]" />
              <Chevron className="w-3 h-2" color="#888" w={1.2} />
              <select disabled aria-label="Font size" className="absolute inset-0 appearance-none" />
            </div>
            <div className="relative w-[257px] h-7 shrink-0 flex items-center bg-white border border-[#bcbcbc] p-0.5 pr-[7px] gap-2.5">
              <span className="flex-1 h-full bg-[#efefef]" />
              <Chevron className="w-3 h-2" color="#888" w={1.2} />
              <select disabled aria-label="Font" className="absolute inset-0 appearance-none" />
            </div>
            <Tool label="Font color" caret dim>
              <span className="w-6 ml-0.5 border-b-5 border-[#a2a2a2] text-center text-2xl leading-5 text-[#a9adb1] font-['Liberation_Serif',serif]">
                A
              </span>
            </Tool>
          </Row>
          <Row className="gap-2.5 font-['Liberation_Serif',serif] text-[#a9adb1]">
            <span className="flex items-center gap-1">
              <Tool label="Larger text">
                <span className="relative w-6 text-[34px] leading-6 text-left">
                  A
                  <svg viewBox="0 0 6 5" className="absolute right-0 top-0 w-1.5 h-[5px]" aria-hidden="true">
                    <path d="M0 5L3 0L6 5Z" fill="#ecb0aa" />
                  </svg>
                </span>
              </Tool>
              <Tool label="Smaller text">
                <span className="relative w-6 pt-1.5 pl-0.5 text-2xl leading-6 text-left">
                  A
                  <svg viewBox="0 0 6 5" className="absolute right-0 top-2 w-1.5 h-[5px]" aria-hidden="true">
                    <path d="M0 0L3 5L6 0Z" fill="#ecb0aa" />
                  </svg>
                </span>
              </Tool>
            </span>
            <span className="flex items-center gap-1">
              <Tool label="Bold">
                <span className="w-6 text-center text-[34px] leading-6 font-bold">B</span>
              </Tool>
              <Tool label="Italic">
                <span className="w-6 text-center text-[34px] leading-6 italic">I</span>
              </Tool>
              <Tool label="Underline">
                <span className="w-6 h-6 text-center text-[28px] leading-[22px] border-b-2 border-[#a9adb1]">U</span>
              </Tool>
            </span>
            <span className="flex items-center gap-1">
              <Tool label="Superscript">
                <ScriptIco y={10} />
              </Tool>
              <Tool label="Subscript">
                <ScriptIco y={24} />
              </Tool>
            </span>
            <span className="flex items-center gap-1">
              <Tool label="Rotate text left">
                <TextRotIco />
              </Tool>
              <Tool label="Rotate text right">
                <TextRotIco flip />
              </Tool>
              <Tool label="Alignment" caret dim>
                <AlignIco />
              </Tool>
              <Tool label="Line spacing" caret dim>
                <SpacingIco />
              </Tool>
            </span>
          </Row>
        </Group>

        <Group label="Export" width="w-[69px]" pad="px-2.5">
          <Tool label="Export">
            <span className="pt-1">
              <ExportIco />
            </span>
          </Tool>
        </Group>

        <Group label="Print" width="w-[39px]">
          <Row>
            <Tool label="Print">
              <PrinterIco />
            </Tool>
          </Row>
          <Row>
            <Tool label="Print now">
              <PrinterIco check />
            </Tool>
          </Row>
        </Group>

        <Group label="Send" width="w-[78px]">
          <Row>
            <Tool label="Send mail" caret>
              <MailIco />
            </Tool>
          </Row>
          <Row className="gap-3.5">
            <Tool label="Send to PowerPoint">
              <LetterTile ch="P" color="#d8583f" />
            </Tool>
            <Tool label="Send to Word">
              <LetterTile ch="W" color="#4468a3" />
            </Tool>
          </Row>
        </Group>

        <Group label="Cloud" width="w-[69px]" pad="px-2.5">
          <span className="pt-3.5 flex">
            <Tool label="Prism Cloud">
              <CloudLogo />
            </Tool>
          </span>
        </Group>

        <Group label="LA" width="w-[51px]">
          <Row />
          <Row>
            <Tool label="LabArchives" caret>
              <CubeIco />
            </Tool>
          </Row>
        </Group>

        <Group label="Help" width="w-[67px]">
          <Row>
            <Tool label="Learn">
              <CapIco />
            </Tool>
            <Tool label="News">
              <NewsIco />
            </Tool>
          </Row>
          <Row>
            <Tool label="Help" caret>
              <HelpIco />
            </Tool>
          </Row>
        </Group>

        <div className="pl-[3px] pt-7">
          <svg viewBox="0 0 110 44" className="w-[110px] h-11" role="img" aria-label="GraphPad Prism" fontFamily="Liberation Sans, Arial, sans-serif">
            <text x="-1" y="39" fontSize="39" fill="#939393" stroke="#939393" strokeWidth="1.500">
              Prism
            </text>
            <text x="50" y="10" fontSize="11" fill="#a3a3a3">
              <tspan stroke="#a3a3a3" strokeWidth="0.400">
                Graph
              </tspan>
              <tspan fill="#bdbdbd">Pad</tspan>
            </text>
          </svg>
        </div>
      </div>

      <div className="flex-1 min-h-0 flex bg-[#efefef]">
        <div className="w-[353px] shrink-0 flex flex-col bg-white font-['Noto_Sans',sans-serif]">
          <div className="h-12 shrink-0 bg-[#efefef] px-2 pt-2">
            <div className="flex items-center h-8 bg-white border border-b-0 border-[#7a7a7a] px-[7px]">
              <input
                type="text"
                aria-label="Search"
                placeholder="Search..."
                className="flex-1 min-w-0 text-[17px] outline-none placeholder:text-[#5f5f5f]"
              />
              <Chevron className="w-3 h-2" w={1.2} />
            </div>
          </div>
          <div className="h-[520px] shrink-0">
            {sections.map((s) => (
              <NavSection key={s.title} {...s} />
            ))}
          </div>
          <div className="h-[7px] shrink-0 bg-[#a3a3a3] border-y border-[#5c5c5c] flex items-center justify-center">
            <span className="w-[26px] h-[3px] border-y border-[#666]" />
          </div>
          <NavSection
            title="Family"
            open={false}
            items={[
              { kind: "table", text: "Data 2", bold: true },
              { kind: "graph", text: "Data 2", bold: true, on: true },
            ]}
          />
        </div>

        <div className="w-[7px] shrink-0 flex flex-col bg-[#f5f5f5] border-x border-[#8a8a8a]">
          <div className="h-[568px] flex items-center justify-center border-b border-[#a0a0a0]">
            <Grip />
          </div>
          <div className="flex-1 flex items-center justify-center">
            <Grip />
          </div>
        </div>

        <div className="w-[154px] shrink-0" />
        <main className="relative flex-1 min-w-0 bg-white border-l border-[#9a9a9a] flex items-center justify-center">
          <Chart />
          <Warning />
        </main>
        <div className="w-[26px] shrink-0 flex border-r border-[#8a8a8a]">
          <div className="w-6 flex flex-col items-center py-2.5">
            <Chevron className="w-3 h-2 rotate-180" w={2.8} />
            <div className="grow-19 basis-0" />
            <div className="grow-44 basis-0 w-full bg-[#cdcdcd]" />
            <div className="grow-19 basis-0" />
            <Chevron className="w-3 h-2" w={2.8} />
          </div>
        </div>
        <div className="w-[154px] shrink-0" />
      </div>

      <footer className="h-[53px] shrink-0 flex flex-col">
        <div className="h-2 shrink-0 bg-white border-t-2 border-[#b1b1b4]" />
        <div className="flex-1 flex items-start border-t-2 border-[#b1b1b6] bg-linear-to-r from-[#f8f8fa] via-[#dfe0e5] to-[#d8d9de]">
          <div className="h-[42px] w-[401px] shrink-0 flex items-center pl-2.5 pr-2.5">
            <button type="button" aria-label="Collapse navigator">
              <Ico className="size-[22px]">
                <rect x="1" y="1" width="22" height="22" fill="#fff" stroke="#8f9297" strokeWidth="1.600" />
                <rect x="1" y="1" width="22" height="5" fill="#cfd0d3" stroke="#8f9297" />
                <rect x="8" y="6" width="15" height="17" fill="#e3e5ee" stroke="#8f9297" />
                <path d="M22 14H11M15 9.500L10.500 14L15 18.500" stroke={INK} strokeWidth="2" />
              </Ico>
            </button>
            <div className="flex-1" />
            <div className="flex items-center gap-2.5">
              <button type="button" aria-label="Previous sheet">
                <Ico>
                  <path d="M3 12L21 2V22Z" fill="#4bb244" stroke="#2f8a2c" />
                </Ico>
              </button>
              <button type="button" aria-label="Next sheet">
                <Ico>
                  <path d="M22 12L4 2V22Z" fill="#4bb244" stroke="#2f8a2c" />
                </Ico>
              </button>
              <button type="button" aria-label="Toggle sheets">
                <Ico>
                  <path d="M13 15L17 12L23 20L20 23Z" fill="#eba642" stroke="#c5822a" />
                  <path d="M1 9A9 9 0 0 1 19 9C19 13 16 17 13 20C6 19 1 16 1 9Z" fill="#3f9c37" />
                  <circle cx="17.500" cy="4.500" r="4.500" fill="#fff" stroke="#d5d5d5" strokeWidth="0.500" />
                </Ico>
              </button>
            </div>
            <span className="pl-1.5 pr-2">
              <span className="flex">
                <Divider />
              </span>
            </span>
            <button type="button" aria-label="Sheet gallery">
              <Ico className="size-[22px]">
                <rect x="1" y="1" width="22" height="22" fill="#d9dade" stroke="#97999e" strokeWidth="1.600" />
                <path d="M1 5.500H23" stroke="#97999e" strokeWidth="1.600" />
                <path d="M4.500 9H10V13H4.500ZM14 9H19.500V13H14ZM4.500 16.500H10V20.500H4.500ZM14 16.500H19.500V20.500H14Z" fill="#f3f3f5" stroke="#85888e" strokeWidth="1.500" />
              </Ico>
            </button>
          </div>
          <div className="flex items-start shrink-0">
            <BottomTab label="Data tables">
              <TableIco />
            </BottomTab>
            <BottomTab label="Info sheets">
              <InfoIco className="size-[22px]" />
            </BottomTab>
            <BottomTab label="Results">
              <SheetsIco className="size-[22px]" />
            </BottomTab>
            <BottomTab label="Graphs" on>
              <GraphIco />
            </BottomTab>
            <BottomTab label="Layouts">
              <Ico>
                <rect x="0.500" y="0.500" width="23" height="23" fill="#f6f6f9" stroke="#bcbcc2" />
                <path d="M3 5H11M3 8H8" stroke="#777" strokeWidth="1.500" />
                <circle cx="17" cy="7.500" r="4.500" fill="#7b8592" />
                <path d="M4.500 12V21" stroke="#8a6f9a" strokeWidth="2" />
                <path d="M9 15V21" stroke="#d0605a" strokeWidth="2.500" />
                <path d="M14 12V21" stroke="#5a86b8" strokeWidth="2.500" />
                <path d="M19 15V21" stroke="#79b48a" strokeWidth="2.500" />
              </Ico>
            </BottomTab>
          </div>
          <div className="h-[42px] flex-1 flex items-center gap-2 pl-[5px]">
            <div className="relative w-[264px] h-[29px] shrink-0">
              <select
                aria-label="Current sheet"
                defaultValue="Data 2"
                className="size-full appearance-none bg-white border border-[#6f6f6f] pl-1.5 pb-0.5 text-[17px] font-['Noto_Sans',sans-serif]"
              >
                <option>Data 2</option>
              </select>
              <span className="absolute right-2 top-2.5 pointer-events-none">
                <Chevron className="w-3 h-2" w={1.2} />
              </span>
            </div>
            <Tool label="Linked sheets" caret>
              <Ico className="size-[26px]">
                <g stroke={INK} strokeWidth="2.600" strokeLinecap="round">
                  <path d="M10 13A5 5 0 0 0 17.500 13.500L20.500 10.500A5 5 0 0 0 13.500 3.500L11.500 5.500" />
                  <path d="M14 11A5 5 0 0 0 6.500 10.500L3.500 13.500A5 5 0 0 0 10.500 20.500L12.500 18.500" />
                </g>
              </Ico>
            </Tool>
            <Divider />
            <div className="flex-1" />
            <div className="flex items-center gap-3 pr-[18px]">
              <span className="-mr-1.5 flex">
                <Divider />
              </span>
              {["M6 9.500H13", "M6 9.500H13M9.500 6V13"].map((d, i) => (
                <button key={d} type="button" aria-label={i ? "Zoom in" : "Zoom out"}>
                  <Ico>
                    <circle cx="9.500" cy="9.500" r="8" fill="#e9edf1" stroke="#43505d" strokeWidth="2" />
                    <path d="M15 15L22.500 22.500" stroke="#43505d" strokeWidth="4" />
                    <path d={d} stroke="#43505d" strokeWidth="1.800" />
                  </Ico>
                </button>
              ))}
            </div>
          </div>
        </div>
      </footer>
    </div>
  );
}
